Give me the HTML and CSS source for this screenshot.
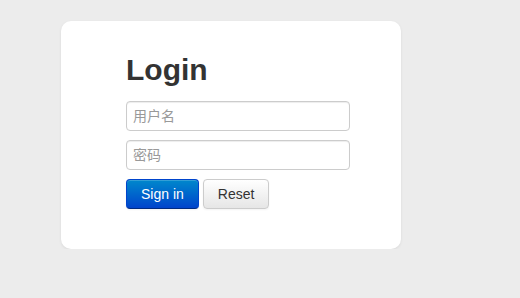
FILE: index.html
```html
<!DOCTYPE html>
<html lang="zh-CN">
<head>
    <meta charset="UTF-8">
    <meta name="viewport" content="width=device-width, initial-scale=1.0">
    <title>Login</title>
    <link rel="stylesheet" href="styles.css">
</head>
<body>
    <div class="login-box">
        <form class="login-form">
            <h1>Login</h1>
            <input type="text" class="input" placeholder="用户名">
            <input type="password" class="input" placeholder="密码">
            <div class="actions">
                <button type="submit" class="btn btn-primary">Sign in</button>
                <button type="reset" class="btn">Reset</button>
            </div>
        </form>
    </div>
</body>
</html>
```

FILE: styles.css
```css
/* Global */
* {
    box-sizing: border-box;
}

body {
    margin: 0;
    padding: 21px 0 0 61px;
    background: #ececec;
    font-family: "Liberation Sans", Arial, "Noto Sans CJK SC", sans-serif;
    font-size: 14px;
    color: #333;
}

/* Card */
.login-box {
    width: 340px;
    height: 228px;
    padding: 29px 65px 0;
    background: #fff;
    border-radius: 10px;
    box-shadow: 0 1px 3px rgba(0, 0, 0, 0.08);
}

.login-form {
    display: flex;
    flex-direction: column;
    gap: 9px;
    width: 224px;
}

h1 {
    margin: 0 0 2px;
    font-size: 30px;
    line-height: 40px;
    font-weight: bold;
    color: #333;
}

/* Inputs */
.input {
    width: 224px;
    height: 30px;
    margin: 0;
    padding: 4px 6px;
    border: 1px solid #ccc;
    border-radius: 4px;
    font-family: inherit;
    font-size: 14px;
    color: #555;
    box-shadow: inset 0 1px 1px rgba(0, 0, 0, 0.075);
}

.input::placeholder {
    color: #999;
}

/* Buttons */
.actions {
    display: flex;
    gap: 4px;
}

.btn {
    height: 30px;
    padding: 4px 14px;
    border: 1px solid #ccc;
    border-radius: 4px;
    background: linear-gradient(#ffffff, #e6e6e6);
    font-family: inherit;
    font-size: 14px;
    line-height: 20px;
    color: #333;
    box-shadow: inset 0 1px 0 rgba(255, 255, 255, 0.2), 0 1px 2px rgba(0, 0, 0, 0.05);
    cursor: pointer;
}

.btn-primary {
    border-color: #0044cc #0044cc #002a80;
    background: linear-gradient(#0088cc, #0044cc);
    color: #fff;
}
```
